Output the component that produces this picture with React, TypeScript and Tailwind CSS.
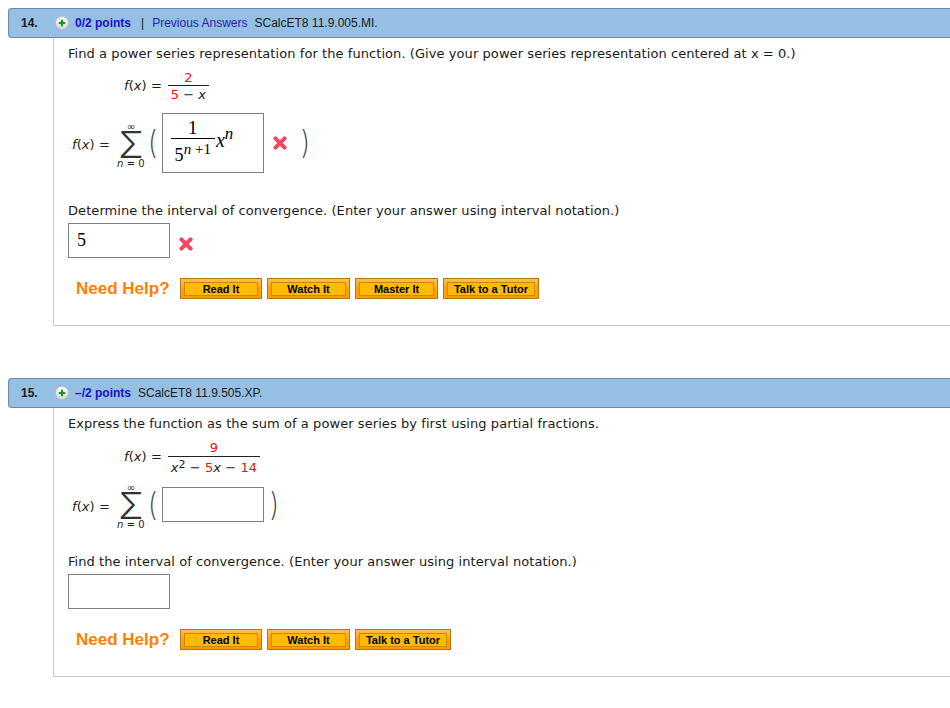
const sans = "font-['Liberation_Sans',Arial,sans-serif] tracking-normal";

function PlusIcon() {
  return (
    <svg width="14" height="14" viewBox="0 0 14 14" className="shrink-0">
      <defs>
        <linearGradient id="pg" x1="0" y1="0" x2="0" y2="1">
          <stop offset="0" stopColor="#ffffff" />
          <stop offset="1" stopColor="#d5d5d5" />
        </linearGradient>
      </defs>
      <circle cx="7" cy="7" r="6.5" fill="url(#pg)" stroke="#b4bcc4" strokeWidth="0.6" />
      <path d="M7 3.8v6.4M3.8 7h6.4" stroke="#0f9a1c" strokeWidth="2" />
    </svg>
  );
}

function XIcon() {
  return (
    <svg width="14" height="14" viewBox="0 0 14 14" className="shrink-0 block">
      <path d="M2.4 2.4 L11.6 11.6 M11.6 2.4 L2.4 11.6" stroke="#f2475f" strokeWidth="4" strokeLinecap="round" />
    </svg>
  );
}

function Header({ num, children }: { num: string; children: React.ReactNode }) {
  return (
    <div className={`${sans} ml-2 h-[30px] flex items-center bg-[#95bfe3] border border-r-0 border-[#6f8ba3] rounded-l-[4px] text-[12px] text-[#1a1a1a]`}>
      <span className="w-[46px] pl-3 font-bold">{num}</span>
      <PlusIcon />
      <span className="ml-[6px] flex items-center whitespace-pre">{children}</span>
    </div>
  );
}

function Helps({ items }: { items: [string, number][] }) {
  return (
    <div className={`${sans} flex items-center ml-2`}>
      <span className="w-[104px] text-[17px] font-bold text-[#ff8000] whitespace-nowrap">Need Help?</span>
      <div className="flex gap-[5px]">
        {items.map(([t, w]) => (
          <div key={t} style={{ width: w }} className="h-[21px] px-[3px] pt-[3px] pb-[2px] bg-gradient-to-b from-[#ffc04d] via-[#ff9f0a] to-[#ff9a00] border border-[#b9770f]">
            <div className="h-full border border-[#c58a12] bg-[#ffbb00] flex items-center justify-center text-[11px] font-bold text-black">
              {t}
            </div>
          </div>
        ))}
      </div>
    </div>
  );
}

function Fx() {
  return (
    <span className="text-[13px] whitespace-nowrap">
      <i>f</i>(<i>x</i>) =
    </span>
  );
}

function Sum({ children }: { children: React.ReactNode }) {
  return (
    <div className="flex items-center ml-1 text-[#222]">
      <span className="mt-[4px] flex"><Fx /></span>
      <div className="ml-[9px] w-[24px] mt-[6px] flex flex-col items-center shrink-0">
        <span className="text-[10px] leading-[8px]">∞</span>
        <span className="font-['Inter',sans-serif] text-[37px] leading-[27px] font-light text-[#333]">Σ</span>
        <span className="text-[10px] leading-[12px] whitespace-nowrap">
          <i>n</i> = 0
        </span>
      </div>
      {children}
    </div>
  );
}

function Paren({ c }: { c: string }) {
  return <span className="w-[19px] text-center font-['Inter',sans-serif] text-[32px] leading-none font-extralight text-[#444] scale-x-90">{c}</span>;
}

export default function App() {
  return (
    <div className="w-[950px] h-[708px] overflow-hidden bg-white pt-[8px] font-['DejaVu_Sans',Verdana,sans-serif] text-[13px] tracking-[0.07px] text-[#1a1a1a]">
      <Header num="14.">
        <span className="font-bold text-[#1f10c8]">0/2 points</span>
        <span className="ml-[10px] mr-[8px]">|</span>
        <span className="text-[#2b1bb5]">Previous Answers</span>
        <span className="ml-[7px]">SCalcET8 11.9.005.MI.</span>
      </Header>
      <div className="ml-[53px] h-[288px] border-l border-b border-[#cccccc] pl-[14px] pt-[8px]">
        <p className="leading-[16px]">Find a power series representation for the function. (Give your power series representation centered at x = 0.)</p>
        <div className="flex items-center ml-[56px] mt-[8px]">
          <span className="mb-[2px] flex"><Fx /></span>
          <div className="ml-[6px] w-[41px] flex flex-col items-center">
            <span className="text-[#e8120c] leading-[15px]">2</span>
            <span className="w-full border-t border-[#222] text-center leading-[17px] whitespace-nowrap">
              <span className="text-[#e8120c]">5</span> − <i>x</i>
            </span>
          </div>
        </div>
        <div className="mt-[10px]">
          <Sum>
            <Paren c="(" />
            <div className="w-[102px] h-[60px] border border-[#808080] flex items-center pl-[8px] font-['Liberation_Serif',serif] text-black">
              <div className="flex flex-col items-center w-[44px] mt-[2px]">
                <span className="text-[19px] leading-[21px]">1</span>
                <span className="w-full border-t border-black text-[18px] leading-[32px] text-center whitespace-nowrap">
                  5<span className="relative -top-[7px] text-[15px] italic">n</span><span className="relative -top-[7px] text-[15px]"> +1</span>
                </span>
              </div>
              <span className="text-[20px] italic mt-[-6px] ml-[1px]">x<span className="relative -top-[8px] text-[17px]">n</span></span>
            </div>
            <span className="ml-[9px]"><XIcon /></span>
            <span className="ml-[9px] flex"><Paren c=")" /></span>
          </Sum>
        </div>
        <p className="leading-[16px] mt-[30px]">Determine the interval of convergence. (Enter your answer using interval notation.)</p>
        <div className="flex items-center mt-[4px]">
          <div className="w-[102px] h-[35px] border border-[#808080] pl-[8px] font-['Liberation_Serif',serif] text-[18px] leading-[32px] text-black">5</div>
          <span className="ml-[9px] mt-[7px]"><XIcon /></span>
        </div>
        <div className="mt-[18px]">
          <Helps items={[["Read It", 82], ["Watch It", 83], ["Master It", 83], ["Talk to a Tutor", 96]]} />
        </div>
      </div>

      <div className="mt-[52px]">
        <Header num="15.">
          <span className="font-bold text-[#1f10c8]">–/2 points</span>
          <span className="ml-[7px]">SCalcET8 11.9.505.XP.</span>
        </Header>
      </div>
      <div className="ml-[53px] h-[269px] border-l border-b border-[#cccccc] pl-[14px] pt-[8px]">
        <p className="leading-[16px]">Express the function as the sum of a power series by first using partial fractions.</p>
        <div className="flex items-center ml-[56px] mt-[8px]">
          <span className="mb-[5px] flex"><Fx /></span>
          <div className="ml-[6px] w-[92px] flex flex-col items-center">
            <span className="text-[#e8120c] leading-[16px]">9</span>
            <span className="w-full border-t border-[#222] text-center leading-[21px] whitespace-nowrap">
              <i>x</i><span className="relative -top-[4px] text-[11px]">2</span> − <span className="text-[#e8120c]">5</span><i>x</i> − <span className="text-[#e8120c]">14</span>
            </span>
          </div>
        </div>
        <div className="-mt-[1px]">
          <Sum>
            <Paren c="(" />
            <div className="w-[102px] h-[35px] border border-[#808080]" />
            <span className="ml-[1px] flex"><Paren c=")" /></span>
          </Sum>
        </div>
        <p className="leading-[16px] mt-[23px]">Find the interval of convergence. (Enter your answer using interval notation.)</p>
        <div className="w-[102px] h-[35px] border border-[#808080] mt-[4px]" />
        <div className="mt-[18px]">
          <Helps items={[["Read It", 82], ["Watch It", 83], ["Talk to a Tutor", 96]]} />
        </div>
      </div>
    </div>
  );
}
